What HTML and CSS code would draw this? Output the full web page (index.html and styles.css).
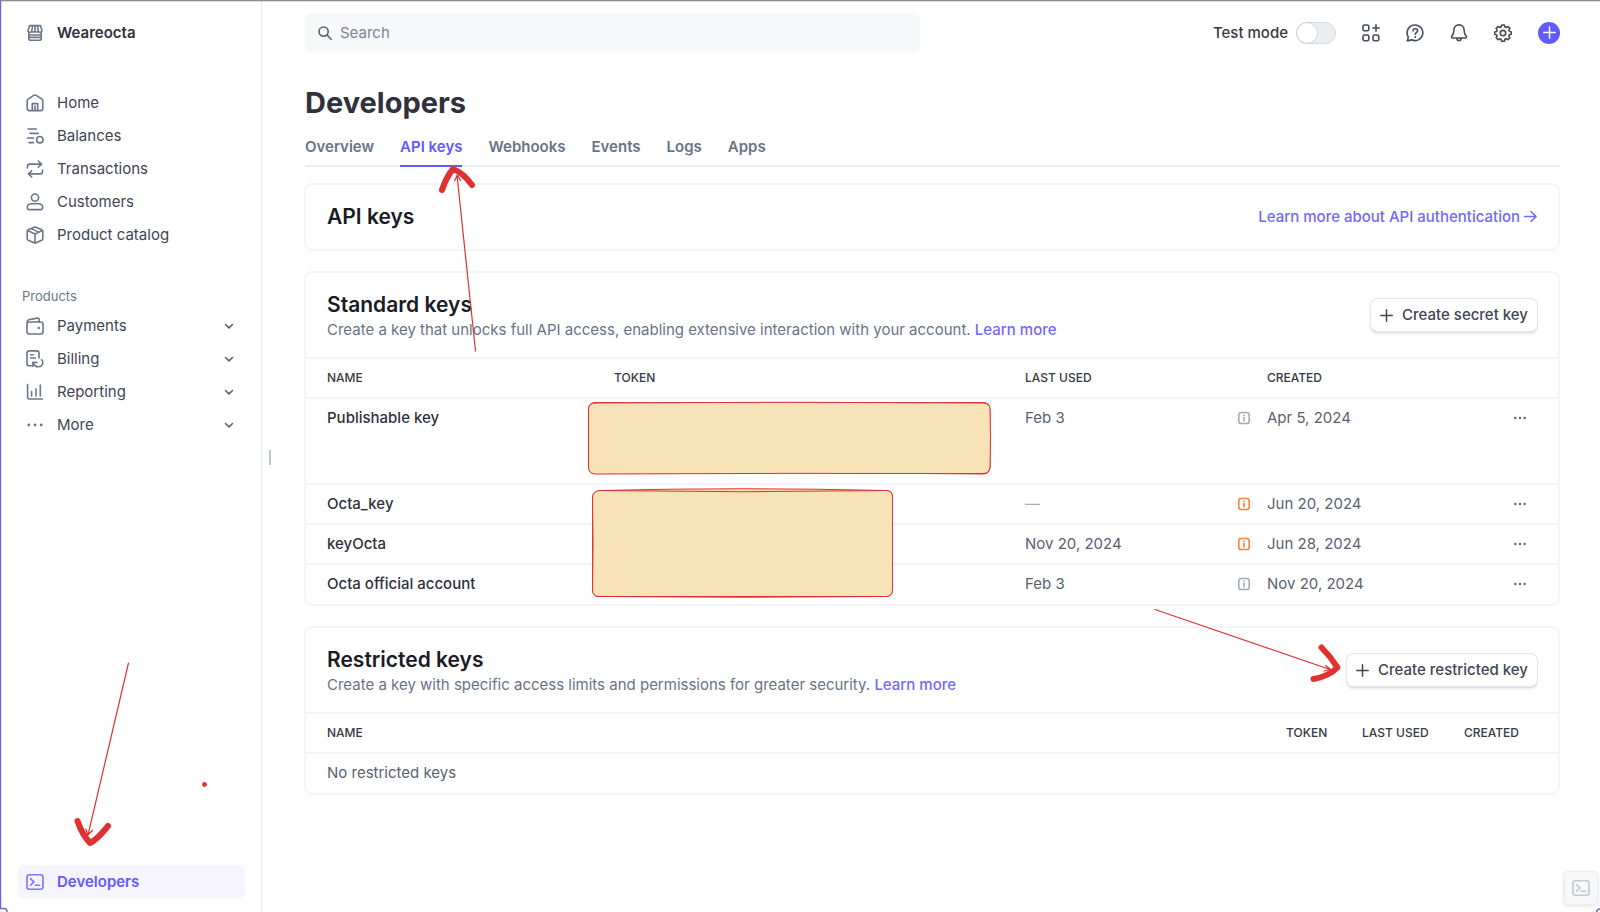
FILE: index.html
```html
<!DOCTYPE html>
<html lang="en">
<head>
    <meta charset="UTF-8">
    <meta name="viewport" content="width=device-width, initial-scale=1.0">
    <title>Developers - API keys</title>
    <link rel="stylesheet" href="styles.css">
</head>
<body>
    <!-- icons used more than once -->
    <svg class="sprite" aria-hidden="true">
        <symbol id="i-chevron" viewBox="0 0 10 10"><path d="M1.5 3.5 5 6.8l3.5-3.3"/></symbol>
        <symbol id="i-plus" viewBox="0 0 14 14"><path d="M7 .8v12.4M.8 7h12.4"/></symbol>
        <symbol id="i-info" viewBox="0 0 14 14"><rect x="1.8" y="1.5" width="10.4" height="11" rx="2.6"/><path d="M7 4v.6M6.4 6.8H7v3.2"/></symbol>
        <symbol id="i-dots" viewBox="0 0 14 14"><circle cx="2.3" cy="7" r="1.2"/><circle cx="7" cy="7" r="1.2"/><circle cx="11.7" cy="7" r="1.2"/></symbol>
        <symbol id="i-terminal" viewBox="0 0 18 18"><rect x="1" y="1.8" width="16" height="14.4" rx="2.4"/><path d="m4.5 5.6 3.4 3.3-3.4 3.3M9.4 12.3h4.2"/></symbol>
    </svg>

    <div class="app">
        <aside class="sidebar">
            <div class="account">
                <svg class="icon" viewBox="0 0 18 18"><path d="M3.6 1.6h10.8l1.5 4.6v.6a1.9 1.9 0 0 1-3.6.4 1.9 1.9 0 0 1-3.3 0 1.9 1.9 0 0 1-3.3 0 1.9 1.9 0 0 1-3.6-.4v-.6zM6.6 1.600 5.800 7M11.400 1.600l.8 5.400M9 1.600V7M2.800 8.600v5.800c0 1.100.8 1.900 1.900 1.900h8.600c1.100 0 1.900-.8 1.900-1.900V8.600M2.800 11h12.400M2.800 13.400h12.400"/></svg>
                <span>Weareocta</span>
            </div>
            <nav class="nav">
                <a href="#" class="nav-item">
                    <svg class="icon" viewBox="0 0 18 18"><path d="M1.200 6.900c0-.7.3-1.300.9-1.700l5.600-3.800a2.300 2.300 0 0 1 2.600 0l5.600 3.800c.6.4.9 1 .9 1.700v7.700c0 1.100-.9 2-2 2H3.200c-1.100 0-2-.9-2-2zM6.300 16.400V9.600h5.400v6.800M9 12v4.400"/></svg>
                    Home
                </a>
                <a href="#" class="nav-item">
                    <svg class="icon" viewBox="0 0 18 18"><path d="M2 2h8.400M4 6.400h8.200M1.500 11h6M3 15.600h4.600"/><circle cx="13.800" cy="12.700" r="3.200"/></svg>
                    Balances
                </a>
                <a href="#" class="nav-item">
                    <svg class="icon" viewBox="0 0 18 18"><path d="M1.400 8V6.600c0-1.500 1-2.500 2.500-2.500h11.300M12.300 1l3.200 3.100-3.200 3.200M16.600 10v1.400c0 1.500-1 2.500-2.500 2.500H2.800M5.700 10.700l-3.200 3.200L5.700 17"/></svg>
                    Transactions
                </a>
                <a href="#" class="nav-item">
                    <svg class="icon" viewBox="0 0 18 18"><circle cx="9" cy="4.600" r="3.600"/><path d="M1.300 14.600c0-2.400 2-3.800 4.300-3.800h6.800c2.300 0 4.300 1.400 4.300 3.800 0 1.200-.8 2-2 2H3.300c-1.200 0-2-.8-2-2z"/></svg>
                    Customers
                </a>
                <a href="#" class="nav-item">
                    <svg class="icon" viewBox="0 0 18 18"><path d="M8 1.200 2.300 3.700c-.7.300-1.100.9-1.100 1.600v7.400c0 .7.4 1.300 1.100 1.600L8 16.800c.6.3 1.400.3 2 0l5.700-2.500c.7-.3 1.100-.9 1.100-1.600V5.300c0-.7-.4-1.300-1.100-1.600L10 1.200a2.400 2.400 0 0 0-2 0zM1.600 4.600 9 8l7.400-3.400M9 8v9M5.200 2.600l7.500 3.500"/></svg>
                    Product catalog
                </a>
            </nav>

            <h2 class="nav-title">Products</h2>
            <nav class="nav">
                <button type="button" class="nav-item">
                    <svg class="icon" viewBox="0 0 18 18"><rect x="1" y="5" width="16" height="12" rx="2.200"/><path d="M1.200 6V4.700c0-1 .6-1.700 1.500-1.900l8.700-1.700c1-.2 1.800.5 1.800 1.500V5"/><circle class="dot" cx="12.800" cy="11" r="1.200"/></svg>
                    <span>Payments</span>
                    <svg class="chevron"><use href="#i-chevron"/></svg>
                </button>
                <button type="button" class="nav-item">
                    <svg class="icon" viewBox="0 0 18 18"><path d="M5.400 15.800H3.200c-1.200 0-2.200-.9-2.200-2.100V3c0-1.200 1-2.100 2.200-2.100h7.600c1.200 0 2.200.9 2.200 2.100v5M4.600 4.800h2.600M4.600 8h4.800M6.900 16.400v-4h4M7.100 12.600c1.300 2.900 2.900 4.200 5 4.200 2.800 0 4.700-1.900 4.700-4.300 0-1.100-.4-2-1.200-2.800"/></svg>
                    <span>Billing</span>
                    <svg class="chevron"><use href="#i-chevron"/></svg>
                </button>
                <button type="button" class="nav-item">
                    <svg class="icon" viewBox="0 0 18 18"><path d="M1.600 1.600v12.800c0 1 .6 1.600 1.600 1.600h13.200M5.600 8.600V13M10 6v7M14.300 2v11"/></svg>
                    <span>Reporting</span>
                    <svg class="chevron"><use href="#i-chevron"/></svg>
                </button>
                <button type="button" class="nav-item">
                    <svg class="icon" viewBox="0 0 18 18"><g class="dot"><circle cx="2.800" cy="9" r="1.400"/><circle cx="9" cy="9" r="1.400"/><circle cx="15.200" cy="9" r="1.400"/></g></svg>
                    <span>More</span>
                    <svg class="chevron"><use href="#i-chevron"/></svg>
                </button>
            </nav>

            <a href="#" class="nav-item active">
                <svg class="icon"><use href="#i-terminal"/></svg>
                Developers
            </a>
            <div class="resize-handle"></div>
        </aside>

        <main class="main">
            <header class="topbar">
                <label class="search">
                    <svg class="search-icon" viewBox="0 0 14 14"><circle cx="5.600" cy="5.600" r="4.600"/><path d="m9 9 4.200 4.200"/></svg>
                    <input type="search" placeholder="Search" aria-label="Search">
                </label>
                <div class="tools">
                    <label class="test-mode">Test mode <input type="checkbox" class="toggle"></label>
                    <button type="button" class="tool" aria-label="Apps">
                        <svg class="icon" viewBox="0 0 18 18"><rect x="1" y="1" width="5.800" height="5.800" rx="1.600"/><rect x="1" y="11" width="5.800" height="5.800" rx="1.600"/><rect x="11" y="11" width="5.800" height="5.800" rx="1.600"/><path d="M14 .8v6.400M10.800 4h6.400"/></svg>
                    </button>
                    <button type="button" class="tool" aria-label="Help">
                        <svg class="icon" viewBox="0 0 18 18"><path d="M9.200 1a7.800 7.800 0 1 1-3.600 14.800c-1.300.7-2.700 1-4.400.8.8-1.300 1.100-2.500.9-4A7.800 7.800 0 0 1 9.200 1z"/><path d="M7 7c.1-1.400 1-2.200 2.300-2.200 1.400 0 2.300.8 2.300 2 0 1.700-2.300 1.700-2.300 3.400"/><circle class="dot" cx="9.300" cy="12.900" r="1"/></svg>
                    </button>
                    <button type="button" class="tool" aria-label="Notifications">
                        <svg class="icon" viewBox="0 0 18 18"><path d="M9 .9c-3 0-5 2.200-5.100 5.100-.1 2.900-.4 4.300-1.900 5.900-.9 1-.5 2.100.8 2.100h12.400c1.300 0 1.700-1.100.8-2.100-1.500-1.600-1.800-3-1.900-5.900C14 3.100 12 .9 9 .9zM6.800 14.200c.2 1.600 1 2.500 2.200 2.500s2-.9 2.200-2.500"/></svg>
                    </button>
                    <button type="button" class="tool" aria-label="Settings">
                        <svg class="icon" viewBox="0 0 18 18"><path d="M7.600 1h2.800l.5 2 1.300.5L14 2.500l1.900 1.900-1 1.800.6 1.300 1.900.5v2.200l-2 .6-.5 1.300 1 1.700-1.900 2-1.800-1-1.300.5-.5 2H7.600l-.5-2-1.300-.5-1.800 1-1.900-2 1-1.700-.6-1.300-1.900-.6V8l2-.5.5-1.300-1-1.800L4 2.500l1.800 1L7.100 3z"/><circle cx="9" cy="9.100" r="2.700"/></svg>
                    </button>
                    <button type="button" class="add" aria-label="Create">
                        <svg class="plus"><use href="#i-plus"/></svg>
                    </button>
                </div>
            </header>

            <h1>Developers</h1>
            <nav class="tabs">
                <a href="#">Overview</a>
                <a href="#" class="current">API keys</a>
                <a href="#">Webhooks</a>
                <a href="#">Events</a>
                <a href="#">Logs</a>
                <a href="#">Apps</a>
            </nav>

            <section class="card">
                <div class="card-header">
                    <h2>API keys</h2>
                    <a href="#" class="link">Learn more about API authentication
                        <svg class="arrow" viewBox="0 0 14 14"><path d="M.8 7h12M7.600 1.600 13 7l-5.400 5.400"/></svg>
                    </a>
                </div>
            </section>

            <section class="card">
                <div class="card-header">
                    <div>
                        <h2>Standard keys</h2>
                        <p>Create a key that unlocks full API access, enabling extensive interaction with your account. <a href="#" class="link">Learn more</a></p>
                    </div>
                    <button type="button" class="btn"><svg class="plus"><use href="#i-plus"/></svg>Create secret key</button>
                </div>
                <table>
                    <colgroup>
                        <col class="col-name"><col><col class="col-used"><col class="col-info"><col class="col-created"><col class="col-menu">
                    </colgroup>
                    <thead>
                        <tr><th>Name</th><th>Token</th><th>Last used</th><th></th><th>Created</th><th></th></tr>
                    </thead>
                    <tbody>
                        <tr class="tall">
                            <td class="name">Publishable key</td><td></td><td>Feb 3</td>
                            <td class="info"><svg><use href="#i-info"/></svg></td><td>Apr 5, 2024</td>
                            <td class="menu"><button type="button" aria-label="More options"><svg><use href="#i-dots"/></svg></button></td>
                        </tr>
                        <tr>
                            <td class="name">Octa_key</td><td></td><td class="muted">—</td>
                            <td class="info warn"><svg><use href="#i-info"/></svg></td><td>Jun 20, 2024</td>
                            <td class="menu"><button type="button" aria-label="More options"><svg><use href="#i-dots"/></svg></button></td>
                        </tr>
                        <tr>
                            <td class="name">keyOcta</td><td></td><td>Nov 20, 2024</td>
                            <td class="info warn"><svg><use href="#i-info"/></svg></td><td>Jun 28, 2024</td>
                            <td class="menu"><button type="button" aria-label="More options"><svg><use href="#i-dots"/></svg></button></td>
                        </tr>
                        <tr>
                            <td class="name">Octa official account</td><td></td><td>Feb 3</td>
                            <td class="info"><svg><use href="#i-info"/></svg></td><td>Nov 20, 2024</td>
                            <td class="menu"><button type="button" aria-label="More options"><svg><use href="#i-dots"/></svg></button></td>
                        </tr>
                    </tbody>
                </table>
            </section>

            <section class="card">
                <div class="card-header">
                    <div>
                        <h2>Restricted keys</h2>
                        <p>Create a key with specific access limits and permissions for greater security. <a href="#" class="link">Learn more</a></p>
                    </div>
                    <button type="button" class="btn"><svg class="plus"><use href="#i-plus"/></svg>Create restricted key</button>
                </div>
                <table>
                    <colgroup>
                        <col><col class="col-r-token"><col class="col-r-used"><col class="col-r-created">
                    </colgroup>
                    <thead>
                        <tr><th>Name</th><th>Token</th><th>Last used</th><th>Created</th></tr>
                    </thead>
                    <tbody>
                        <tr><td colspan="4">No restricted keys</td></tr>
                    </tbody>
                </table>
            </section>
        </main>
    </div>

    <button type="button" class="console" aria-label="Open console"><svg class="icon"><use href="#i-terminal"/></svg></button>

    <!-- hand-drawn marks on top of the page -->
    <svg class="marks" width="1600" height="912" viewBox="0 0 1600 912" aria-hidden="true">
        <g class="mask-box">
            <path d="M595 402.500H983q7 0 7 7V467q0 7-7 7Q789 471 595 473.500q-6.500 0-6.500-7Q590 438 588.500 409.500q0-7 6.500-7z"/>
            <path d="M595 403Q789 401.500 983 403q7 0 7 6.500 1 28 0 57.500-.5 6.500-7 6.500Q789 473 595 474q-6.500-.5-6.500-7V410q0-7 6.500-7z"/>
            <path d="M600 490.500Q742 487 886 490.500q6.500 0 6.500 6.500v93q0 6.500-7 6.500Q742 598 599 596.500q-6.500 0-6.500-7V498q0-7 7.500-7.500z"/>
            <path d="M600 490.500Q742 493 886 490.500q6.500 0 6.500 6.500v93q0 6.500-7 6.500H599q-6.500 0-6.500-7Q593.500 544 592.500 498q0-7 7.500-7.500z"/>
        </g>
        <g class="thin">
            <path d="M475.500 351 457 175M454.500 181l2.800-6 3.200 5.500"/>
            <path d="M128.500 663 88 835M85.800 829l2 6 4.600-4.500"/>
            <path d="M1155 609.500 1330 669.500M1325.500 665.500l5 4-6.500 1.500"/>
        </g>
        <g class="thick">
            <path d="M442 190c3-9 6-15 11-21 8 3 14 9 19 16"/>
            <path d="M77.500 821c3 9 7 16 12.500 22 8-4 12-10 18-17"/>
            <path d="M1321.500 647.500c6 6 11 12 16 20-7 7-15 10-24 11.500"/>
        </g>
        <circle class="spot" cx="204.500" cy="784.500" r="2.400"/>
        <g class="frame">
            <path class="frame-top" d="M0 .5H1600"/>
            <path d="M.5 1v907M0 908.500h4q3 0 3 3.500M1600 909q-3 0-3.500 3"/>
        </g>
    </svg>
</body>
</html>
```
FILE: styles.css
```css
* {
    box-sizing: border-box;
}
body {
    margin: 0;
    font-family: Inter, "Liberation Sans", sans-serif;
    font-size: 15px;
    line-height: 20px;
    color: #414552;
    background-color: #fff;
}
a {
    color: inherit;
    text-decoration: none;
}
button {
    font: inherit;
    color: inherit;
    background: none;
    border: none;
    padding: 0;
    cursor: pointer;
}
svg {
    fill: none;
    stroke: currentColor;
    stroke-width: 1.6;
    stroke-linecap: round;
    stroke-linejoin: round;
    flex-shrink: 0;
}
.sprite {
    position: absolute;
    width: 0;
    height: 0;
}
.icon {
    display: block;
    width: 18px;
    height: 18px;
}
.dot {
    fill: currentColor;
    stroke: none;
}
.app {
    display: flex;
    min-height: 100vh;
}

/* sidebar */
.sidebar {
    position: relative;
    display: flex;
    flex-direction: column;
    width: 262px;
    flex-shrink: 0;
    padding: 16px 16px 14px 18px;
    border-right: 1px solid #ebeef1;
}
.account {
    display: flex;
    align-items: center;
    gap: 13px;
    height: 33px;
    margin-bottom: 37px;
    padding: 0 8px;
    font-weight: 600;
    color: #30313d;
}
.account .icon,
.nav-item .icon {
    color: #6c7688;
}
.nav-item {
    display: flex;
    align-items: center;
    gap: 13px;
    width: 100%;
    height: 33px;
    padding: 0 8px;
    border-radius: 6px;
    text-align: left;
}
.nav-item span {
    flex: 1;
}
.nav-title {
    margin: 35px 0 3px;
    padding: 0 4px;
    font-size: 13px;
    line-height: 20px;
    font-weight: 400;
    color: #6c7688;
}
.chevron {
    width: 10px;
    height: 10px;
    margin-right: 3px;
    color: #596171;
}
.nav-item.active {
    margin-top: auto;
    background-color: #f5f4ff;
    color: #625afa;
    font-weight: 600;
}
.nav-item.active .icon {
    color: #7d76fb;
}
.resize-handle {
    position: absolute;
    top: 450px;
    right: -10px;
    width: 2px;
    height: 15px;
    background-color: #c0c8d2;
}

/* top bar */
.main {
    flex: 1;
    min-width: 0;
    padding: 13px 40px 40px 43px;
}
.topbar {
    display: flex;
    align-items: center;
    justify-content: space-between;
    gap: 40px;
}
.search {
    display: flex;
    align-items: center;
    flex: 0 1 615px;
    gap: 8px;
    height: 39px;
    padding: 0 13px;
    border-radius: 6px;
    background-color: #f6f8fa;
}
.search-icon {
    width: 14px;
    height: 14px;
    color: #596171;
}
.search input {
    flex: 1;
    min-width: 0;
    padding: 0;
    border: none;
    outline: none;
    background: none;
    font: inherit;
}
.search input::placeholder {
    color: #7a8394;
    opacity: 1;
}
.tools {
    display: flex;
    align-items: center;
    gap: 26px;
    color: #474e5a;
}
.test-mode {
    display: flex;
    align-items: center;
    gap: 8px;
    font-weight: 500;
    color: #353a44;
}
.toggle {
    appearance: none;
    display: flex;
    width: 40px;
    height: 22px;
    margin: 0;
    border: 1px solid #d5dbe1;
    border-radius: 11px;
    background-color: #ebeef1;
}
.toggle::before {
    content: "";
    width: 20px;
    height: 20px;
    border-radius: 50%;
    background-color: #fff;
    box-shadow: 0 0 2px rgba(0, 0, 0, 0.25);
}
.add {
    display: flex;
    align-items: center;
    justify-content: center;
    width: 22px;
    height: 22px;
    border-radius: 50%;
    background-color: #625afa;
    color: #fff;
}
.plus {
    width: 13px;
    height: 13px;
}

/* page heading */
h1 {
    margin: 33px 0 16px;
    font-size: 29px;
    line-height: 36px;
    font-weight: 700;
    color: #30313d;
}
.tabs {
    display: flex;
    gap: 26px;
    margin-bottom: 16px;
    border-bottom: 2px solid #ebeef1;
    font-weight: 600;
    color: #687385;
}
.tabs a {
    height: 30px;
    margin-bottom: -2px;
}
.tabs .current {
    border-bottom: 2px solid #625afa;
    color: #625afa;
}

/* cards */
.card {
    margin: 0 0 20px -1px;
    border: 2px solid #f3f5f8;
    border-radius: 8px;
}
.card-header {
    display: flex;
    align-items: center;
    justify-content: space-between;
    padding: 17px 21px;
}
h2 {
    margin: 0;
    font-size: 21px;
    line-height: 30px;
    font-weight: 600;
    color: #1a1b25;
}
p {
    margin: 0;
    color: #687385;
}
.link {
    font-weight: 500;
    color: #7169fb;
}
.arrow {
    width: 13px;
    height: 13px;
    vertical-align: -1px;
}
.btn {
    display: flex;
    align-items: center;
    gap: 9px;
    height: 32px;
    padding: 0 9px;
    border-radius: 6px;
    font-weight: 500;
    box-shadow: 0 0 0 1px #e3e6ea, 0 2px 3px rgba(64, 68, 82, 0.25);
}

/* tables */
table {
    width: 100%;
    table-layout: fixed;
    border-collapse: collapse;
}
.col-name { width: 287px; }
.col-used { width: 212px; }
.col-info { width: 30px; }
.col-created { width: 246px; }
.col-menu { width: 66px; }
.col-r-token { width: 76px; }
.col-r-used { width: 102px; }
.col-r-created { width: 115px; }
th,
td {
    height: 40px;
    padding: 9px 0 9px 21px;
    border-top: 2px solid #f3f5f8;
    text-align: left;
    vertical-align: top;
    color: #596171;
}
th {
    font-size: 12px;
    font-weight: 500;
    text-transform: uppercase;
    color: #353a44;
}
.tall td {
    height: 86px;
}
td.name {
    font-weight: 500;
    color: #30313d;
}
td.muted {
    color: #a3acba;
}
td.info {
    color: #a3acba;
}
td.info.warn {
    color: #f5833b;
}
td.info svg,
td.menu svg {
    display: block;
    width: 14px;
    height: 14px;
    margin: 3px 0;
}
td.menu button {
    display: block;
}
td.menu svg {
    fill: currentColor;
    stroke: none;
}

/* floating console button */
.console {
    position: fixed;
    right: 3px;
    bottom: 8px;
    display: flex;
    align-items: center;
    justify-content: center;
    width: 32px;
    height: 32px;
    border-radius: 4px;
    background-color: #f6f8fa;
    color: #c0c8d2;
    box-shadow: 0 0 0 1px #ebeef1, 0 1px 4px rgba(64, 68, 82, 0.25);
}

/* marks */
.marks {
    position: absolute;
    top: 0;
    left: 0;
    pointer-events: none;
}
.mask-box {
    fill: #f8e3b8;
    stroke: #e03131;
    stroke-width: 1;
}
.thin {
    stroke: #e03131;
    stroke-width: 1.2;
}
.thick {
    stroke: #e03131;
    stroke-width: 6;
}
.spot {
    fill: #e03131;
    stroke: none;
}
.frame {
    stroke: #6965db;
    stroke-width: 1.4;
}
.frame-top {
    stroke: #8c8c8c;
}
```
